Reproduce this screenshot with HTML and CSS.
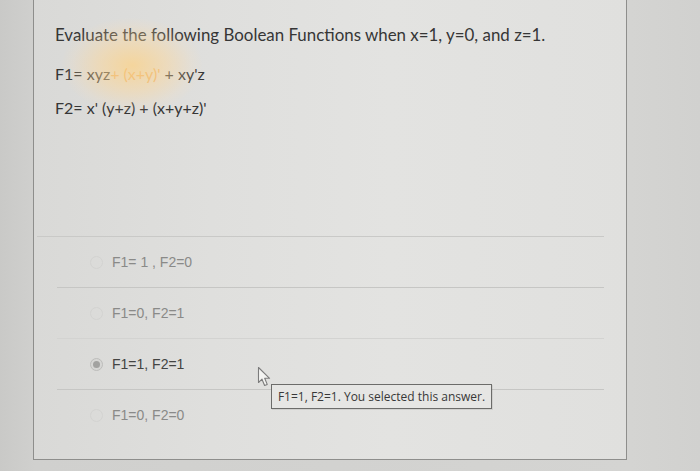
FILE: index.html
```html
<!DOCTYPE html>
<html>
<head>
<meta charset="utf-8">
<link rel="stylesheet" href="styles.css">
</head>
<body>
<div class="screen">
  <div class="box">
    <p class="question">Evaluate the following Boolean Functions when x=1, y=0, and z=1.</p>
    <p class="formula f1">F1= xyz<span class="glowtext">+ (x+y)'</span> + xy'z</p>
    <p class="formula f2">F2= x' (y+z) + (x+y+z)'</p>
    <div class="answers">
      <div class="row strong"><span class="radio"></span><span class="label">F1= 1 , F2=0</span></div>
      <div class="row faint"><span class="radio"></span><span class="label">F1=0, F2=1</span></div>
      <div class="row strong selected"><span class="radio"><span class="dot"></span></span><span class="label">F1=1, F2=1</span></div>
      <div class="row faint"><span class="radio"></span><span class="label">F1=0, F2=0</span></div>
    </div>
  </div>
  <div class="glow"></div>
  <svg class="cursor" width="17" height="22" viewBox="0 0 17 22">
    <path d="M1.5 1.5 L1.5 16.5 L5 13.2 L7.6 19.5 L10.2 18.4 L7.7 12.3 L12.6 12.3 Z" fill="#f4f4f2" stroke="#7c7c7c" stroke-width="1.1" stroke-linejoin="round"/>
  </svg>
  <div class="tooltip">F1=1, F2=1. You selected this answer.</div>
</div>
</body>
</html>
```
FILE: styles.css
```css
html, body {
  margin: 0;
  padding: 0;
}
body {
  width: 700px;
  height: 471px;
  overflow: hidden;
  background: linear-gradient(90deg, #c9c9c7 0%, #d0d0ce 5%, #d4d4d2 90%, #d1d1cf 100%);
}
.screen {
  position: relative;
  width: 700px;
  height: 471px;
}
.box {
  margin-left: 33px;
  width: 592px;
  height: 459px;
  border-left: 1.5px solid #8e8e8c;
  border-right: 1.5px solid #8e8e8c;
  border-bottom: 1.5px solid #8e8e8c;
  background: linear-gradient(90deg, #d9d9d7 0%, #dfdfdd 30%, #e3e3e1 60%, #e0e0de 100%);
  font-family: Lato, "Open Sans", sans-serif;
  color: #363636;
}
.question {
  margin: 0;
  padding: 25px 0 0 21px;
  font-size: 16.9px;
  line-height: 20px;
}
.formula {
  margin: 0;
  padding-left: 21px;
  font-size: 16px;
  line-height: 20px;
}
.f1 {
  margin-top: 19px;
}
.f2 {
  margin-top: 14px;
}
.glowtext {
  color: #e4ad6a;
}
.answers {
  margin-top: 118px;
  margin-left: 3px;
  margin-right: 22px;
  border-top: 1px solid #c9c9c7;
}
.row {
  display: flex;
  align-items: center;
  height: 50px;
  margin-left: 20px;
  font-family: "Liberation Sans", Arial, sans-serif;
  font-size: 14px;
  color: #8a8a88;
}
.row.faint {
  border-bottom: 1px solid #d3d3d1;
}
.row.strong {
  border-bottom: 1px solid #c6c6c4;
}
.row:last-child {
  border-bottom: none;
}
.radio {
  box-sizing: border-box;
  width: 13px;
  height: 13px;
  margin-left: 33px;
  margin-right: 9px;
  border-radius: 50%;
  border: 1px solid #d3d3d1;
  display: flex;
  align-items: center;
  justify-content: center;
}
.selected {
  color: #444442;
}
.selected .radio {
  border: 1.5px solid #bdbdbb;
  background: #d6d6d4;
}
.dot {
  width: 7px;
  height: 7px;
  border-radius: 50%;
  background: #a2a2a0;
}
.glow {
  position: absolute;
  left: 62px;
  top: 18px;
  width: 140px;
  height: 95px;
  border-radius: 50%;
  background: radial-gradient(ellipse at center, rgba(255, 210, 130, 0.7) 0%, rgba(255, 215, 150, 0.45) 35%, rgba(255, 222, 175, 0.15) 60%, rgba(255, 225, 180, 0) 72%);
  pointer-events: none;
}
.cursor {
  position: absolute;
  left: 257px;
  top: 366px;
}
.tooltip {
  position: absolute;
  left: 271px;
  top: 384px;
  width: 219px;
  height: 23px;
  border: 1px solid #6c6c6a;
  background: #e6e6e4;
  font-family: "Open Sans", "Liberation Sans", sans-serif;
  font-size: 12px;
  line-height: 23px;
  color: #383838;
  text-align: center;
  box-shadow: 1px 1px 0 rgba(0,0,0,0.08);
}
```
